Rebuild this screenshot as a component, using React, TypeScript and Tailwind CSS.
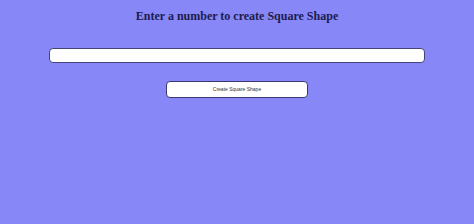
export default function App() {
  return (
    <div className="flex min-h-[224px] w-full flex-col items-center bg-[#8787f7]">
      <h1 className="mt-[7px] font-['Liberation_Serif',serif] text-[12px] leading-[18px] font-bold text-[#1c1c4c]">
        Enter a number to create Square Shape
      </h1>
      <input
        type="text"
        className="mt-[23px] h-[15px] w-[376px] rounded-[4px] border border-[#44447a] bg-white"
      />
      <button className="mt-[18px] h-[17px] w-[142px] rounded-[4px] border-[1.5px] border-[#3a3a6e] bg-white font-['Liberation_Sans',sans-serif] text-[5px] text-[#333]">
        Create Square Shape
      </button>
    </div>
  );
}
